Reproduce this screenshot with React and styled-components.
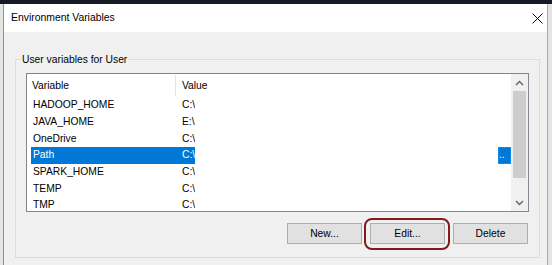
import React from "react";
import styled, { createGlobalStyle } from "styled-components";

const GlobalStyle = createGlobalStyle`
  html, body { margin: 0; padding: 0; }
  body {
    font-family: "Liberation Sans", Arial, sans-serif;
    font-size: 10.3px;
    color: #000;
  }
`;

const Screen = styled.div`
  width: 552px;
  height: 265px;
  display: flex;
  flex-direction: column;
  background: #161a24;
  overflow: hidden;
`;

const TopStrip = styled.div`
  flex: none;
  height: 4px;
  background: #161a24;
`;

const Main = styled.div`
  flex: 1;
  min-height: 0;
  display: flex;
`;

const SideStrip = styled.div`
  flex: none;
  width: ${(p) => p.$w}px;
  background: #e4e4e4;
`;

const Dialog = styled.div`
  flex: 1;
  min-width: 0;
  display: flex;
  flex-direction: column;
  border-left: 1px solid #8f8f8f;
  border-right: 1px solid #a8a8a8;
`;

const TitleBar = styled.div`
  flex: none;
  height: 28px;
  background: #fff;
  display: flex;
  align-items: center;
  justify-content: space-between;
  padding-left: 7px;
`;

const Title = styled.span`
  font-size: 10.4px;
  line-height: 14px;
`;

const CloseBox = styled.div`
  width: 20px;
  height: 28px;
  display: flex;
  align-items: center;
  justify-content: center;
`;

const Body = styled.div`
  flex: 1;
  background: #f0f0f0;
  padding: 27px 7px 0 11px;
`;

const GroupBox = styled.div`
  position: relative;
  border: 1px solid #dcdcdc;
  padding: 13px 10px 13px 10px;
`;

const Legend = styled.span`
  position: absolute;
  top: -7px;
  left: 5px;
  padding: 0 1px;
  background: #f0f0f0;
  line-height: 13px;
`;

const ListBox = styled.div`
  box-sizing: border-box;
  height: 139px;
  border: 1px solid #828790;
  background: #fff;
  display: flex;
  overflow: hidden;
`;

const Table = styled.div`
  flex: 1;
  min-width: 0;
  display: flex;
  flex-direction: column;
  overflow: hidden;
`;

const HeaderRow = styled.div`
  flex: none;
  height: 23px;
  display: flex;
  align-items: stretch;
`;

const HeaderCell = styled.div`
  box-sizing: border-box;
  width: ${(p) => (p.$w ? `${p.$w}px` : "auto")};
  flex: ${(p) => (p.$w ? "none" : "1")};
  padding-left: ${(p) => p.$pad}px;
  display: flex;
  align-items: center;
  border-right: ${(p) => (p.$sep ? "1px solid #e5e5e5" : "none")};
  margin: 1px 0;
`;

const Row = styled.div`
  flex: none;
  height: 16.7px;
  display: flex;
  align-items: center;
  margin-left: 4px;
  line-height: 16px;
`;

const Cell = styled.div`
  box-sizing: border-box;
  flex: none;
  width: ${(p) => p.$w}px;
  height: 100%;
  padding-left: ${(p) => p.$pad}px;
  display: flex;
  align-items: center;
  overflow: hidden;
  white-space: nowrap;
  background: ${(p) => (p.$sel ? "#0078d7" : "transparent")};
  color: ${(p) => (p.$sel ? "#fff" : "#000")};
`;

const Spacer = styled.div`
  flex: 1;
`;

const Tail = styled.div`
  box-sizing: border-box;
  flex: none;
  width: 13px;
  height: 100%;
  overflow: hidden;
  white-space: nowrap;
  color: #fff;
  line-height: 14px;
  background: ${(p) => (p.$sel ? "#0078d7" : "transparent")};
  border: ${(p) => (p.$sel ? "1px dotted #b07a3a" : "none")};
`;

const Scrollbar = styled.div`
  flex: none;
  width: 17px;
  display: flex;
  flex-direction: column;
  background: #f0f0f0;
`;

const ArrowButton = styled.div`
  flex: none;
  height: 17px;
  display: flex;
  align-items: center;
  justify-content: center;
`;

const Track = styled.div`
  flex: 1;
  padding: 0 2px;
`;

const Thumb = styled.div`
  height: ${(p) => p.$h}px;
  background: #cdcdcd;
`;

const ButtonRow = styled.div`
  display: flex;
  justify-content: flex-end;
  gap: 8px;
  margin-top: 11px;
  margin-right: 1px;
`;

const Highlight = styled.div`
  position: relative;
  &::after {
    content: "";
    position: absolute;
    inset: -5px -5px -6px -6px;
    border: 2px solid #7f1d1d;
    border-radius: 8px;
    pointer-events: none;
  }
`;

const Button = styled.button`
  box-sizing: border-box;
  width: 75px;
  height: 21px;
  background: #e1e1e1;
  border: 1px solid #adadad;
  font-family: "Liberation Sans", Arial, sans-serif;
  font-size: 10.3px;
  color: #000;
  padding: 0;
  display: block;
`;

const Chevron = ({ up }) => (
  <svg width="9" height="6" viewBox="0 0 9 6">
    <path
      d={up ? "M1 5 L4.5 1.5 L8 5" : "M1 1 L4.5 4.5 L8 1"}
      fill="none"
      stroke="#606060"
      strokeWidth="1.4"
    />
  </svg>
);

const rows = [
  { name: "HADOOP_HOME", value: "C:\\" },
  { name: "JAVA_HOME", value: "E:\\" },
  { name: "OneDrive", value: "C:\\" },
  { name: "Path", value: "C:\\", selected: true },
  { name: "SPARK_HOME", value: "C:\\" },
  { name: "TEMP", value: "C:\\" },
  { name: "TMP", value: "C:\\" },
];

export default function App() {
  return (
    <>
      <GlobalStyle />
      <Screen>
        <TopStrip />
        <Main>
          <SideStrip $w={3} />
          <Dialog>
            <TitleBar>
              <Title>Environment Variables</Title>
              <CloseBox>
                <svg width="11" height="11" viewBox="0 0 11 11">
                  <path d="M0.5 0.5 L10.5 10.5 M10.5 0.5 L0.5 10.5" stroke="#000" strokeWidth="1" />
                </svg>
              </CloseBox>
            </TitleBar>
            <Body>
              <GroupBox>
                <Legend>User variables for User</Legend>
                <ListBox>
                  <Table>
                    <HeaderRow>
                      <HeaderCell $w={149} $pad={5} $sep>Variable</HeaderCell>
                      <HeaderCell $pad={6}>Value</HeaderCell>
                    </HeaderRow>
                    {rows.map((r) => (
                      <Row key={r.name}>
                        <Cell $w={145} $pad={2} $sel={r.selected}>{r.name}</Cell>
                        <Cell $w={19} $pad={6} $sel={r.selected}>{r.value}</Cell>
                        <Spacer />
                        <Tail $sel={r.selected}>{r.selected ? ".." : ""}</Tail>
                      </Row>
                    ))}
                  </Table>
                  <Scrollbar>
                    <ArrowButton><Chevron up /></ArrowButton>
                    <Track><Thumb $h={87} /></Track>
                    <ArrowButton><Chevron /></ArrowButton>
                  </Scrollbar>
                </ListBox>
                <ButtonRow>
                  <Button>New...</Button>
                  <Highlight>
                    <Button>Edit...</Button>
                  </Highlight>
                  <Button>Delete</Button>
                </ButtonRow>
              </GroupBox>
            </Body>
          </Dialog>
          <SideStrip $w={4} />
        </Main>
      </Screen>
    </>
  );
}
